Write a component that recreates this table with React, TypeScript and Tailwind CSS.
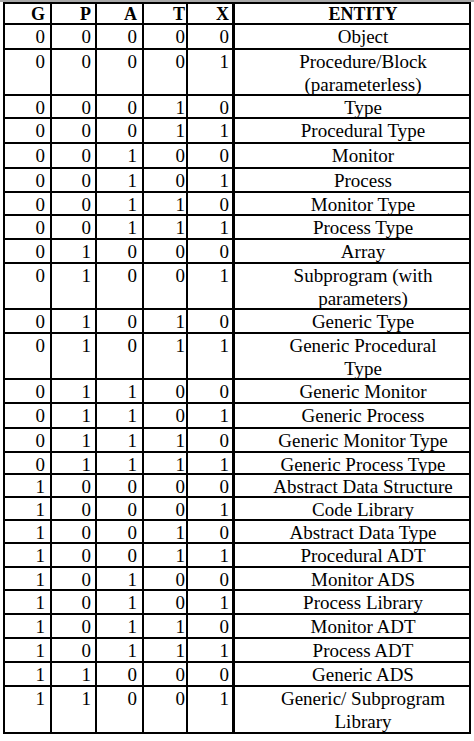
const rows: [string, string[], number][] = [
  ["00000", ["Object"], 25],
  ["00001", ["Procedure/Block", "(parameterless)"], 46],
  ["00010", ["Type"], 23],
  ["00011", ["Procedural Type"], 25],
  ["00100", ["Monitor"], 25],
  ["00101", ["Process"], 24],
  ["00110", ["Monitor Type"], 23],
  ["00111", ["Process Type"], 24],
  ["01000", ["Array"], 24],
  ["01001", ["Subprogram (with", "parameters)"], 46],
  ["01010", ["Generic Type"], 24],
  ["01011", ["Generic Procedural", "Type"], 46],
  ["01100", ["Generic Monitor"], 24],
  ["01101", ["Generic Process"], 25],
  ["01110", ["Generic Monitor Type"], 24],
  ["01111", ["Generic Process Type"], 22],
  ["10000", ["Abstract Data Structure"], 23],
  ["10001", ["Code Library"], 23],
  ["10010", ["Abstract Data Type"], 23],
  ["10011", ["Procedural ADT"], 24],
  ["10100", ["Monitor ADS"], 23],
  ["10101", ["Process Library"], 24],
  ["10110", ["Monitor ADT"], 24],
  ["10111", ["Process ADT"], 24],
  ["11000", ["Generic ADS"], 24],
  ["11001", ["Generic/ Subprogram", "Library"], 47],
];

// widths include the right border of each cell
const bitCols = [
  { w: "w-[47px]", pr: "pr-[5px]", b: "border-r-2" },
  { w: "w-[45px]", pr: "pr-[4px]", b: "border-r-2" },
  { w: "w-[47px]", pr: "pr-[5px]", b: "border-r-2" },
  { w: "w-[44px]", pr: "pr-[1px]", b: "border-r-2" },
  { w: "w-[47px]", pr: "pr-[3px]", b: "border-r-[3px]" },
];

const headers = ["G", "P", "A", "T", "X"];

export default function App() {
  return (
    <div className="w-[474px] h-[741px] bg-white overflow-hidden font-['Liberation_Serif','Times_New_Roman',serif] text-black">
      <div className="h-[2px] bg-[#a8a8a8]" />
      <div className="ml-[3px] w-[468px] border-l-2 border-t-2 border-black">
        <div className="flex h-[21px] border-b-2 border-black text-[18px] font-bold leading-[21px]">
          {headers.map((h, i) => (
            <div
              key={h}
              className={`${bitCols[i].w} ${bitCols[i].pr} ${bitCols[i].b} border-black text-right`}
            >
              {h}
            </div>
          ))}
          <div className="flex-1 pl-[22px] border-r-2 border-black text-center">ENTITY</div>
        </div>

        {rows.map(([bits, entity, h]) => (
          <div
            key={entity.join(" ")}
            className="flex border-b-2 border-black text-[19px] leading-[23px]"
            style={{ height: h }}
          >
            {bits.split("").map((b, i) => (
              <div
                key={i}
                className={`${bitCols[i].w} ${bitCols[i].pr} ${bitCols[i].b} border-black text-right`}
              >
                {b}
              </div>
            ))}
            <div className="flex-1 pl-[22px] border-r-2 border-black text-center">
              {entity.map((line) => (
                <div key={line}>{line}</div>
              ))}
            </div>
          </div>
        ))}
      </div>
    </div>
  );
}
